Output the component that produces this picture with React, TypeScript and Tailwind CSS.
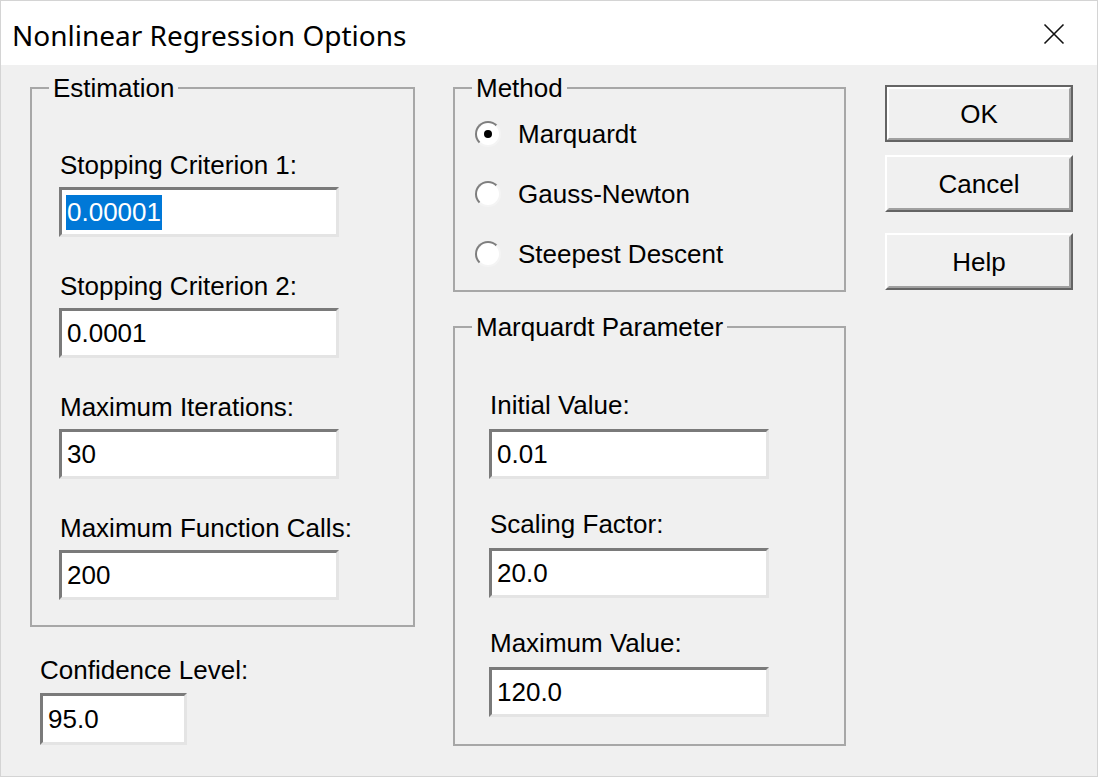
import { FC, ReactNode } from 'react';

const ui = "font-['Liberation_Sans',Arial,sans-serif] text-[26px] leading-[30px] text-black";

const Group: FC<{ title: string; className?: string; children: ReactNode }> = ({ title, className, children }) => (
  <fieldset className={`border-2 border-[#a7a7a7] ${className ?? ''}`}>
    <legend className="ml-[17px] px-[4px] leading-[30px]">{title}</legend>
    {children}
  </fieldset>
);

const Field: FC<{ value: string; selected?: boolean; className?: string }> = ({ value, selected, className }) => (
  <div
    className={`flex items-center border-[3px] border-t-[#7a7a7a] border-l-[#7a7a7a] border-r-[#e4e4e4] border-b-[#e4e4e4] bg-white pl-[4px] ${className ?? 'h-[50px] w-[280px]'}`}
  >
    {selected ? (
      <span className="bg-[#0078d7] px-[1px] leading-[35px] text-white">{value}</span>
    ) : (
      <span className="pl-[1px]">{value}</span>
    )}
  </div>
);

const LabeledField: FC<{ label: string; value: string; selected?: boolean; gap?: string }> = ({ label, value, selected, gap }) => (
  <div className="flex flex-col">
    <div className="pl-[1px]">{label}</div>
    <div className={gap ?? 'mt-[7px]'}>
      <Field value={value} selected={selected} />
    </div>
  </div>
);

const Radio: FC<{ label: string; checked?: boolean }> = ({ label, checked }) => (
  <div className="flex h-[30px] items-center">
    <div className="flex h-[26px] w-[26px] items-center justify-center rounded-full border-2 border-t-[#7e7e7e] border-l-[#7e7e7e] border-r-[#f4f4f4] border-b-[#f4f4f4] bg-white">
      {checked && <div className="h-[8px] w-[8px] rounded-full bg-black" />}
    </div>
    <span className="ml-[17px]">{label}</span>
  </div>
);

const Button: FC<{ label: string; primary?: boolean; className?: string }> = ({ label, primary, className }) =>
  primary ? (
    <div className={`h-[57px] w-[188px] border-2 border-[#646464] ${className ?? ''}`}>
      <div className="flex h-full items-center justify-center border-2 border-t-white border-l-white border-r-[#a0a0a0] border-b-[#a0a0a0]">
        {label}
      </div>
    </div>
  ) : (
    <div className={`h-[57px] w-[188px] border-2 border-t-white border-l-white border-r-[#646464] border-b-[#646464] ${className ?? ''}`}>
      <div className="flex h-full items-center justify-center border-2 border-t-[#f0f0f0] border-l-[#f0f0f0] border-r-[#a0a0a0] border-b-[#a0a0a0]">
        {label}
      </div>
    </div>
  );

export default function App() {
  return (
    <div className="h-[777px] w-[1098px] overflow-hidden border border-[#d4d4d4] bg-[#f0f0f0]">
      {/* title bar */}
      <div className="flex h-[64px] items-center justify-between bg-white pl-[11px] pr-[32px]">
        <span className="mt-[3px] font-['Noto_Sans','Open_Sans',sans-serif] text-[28px] text-black">Nonlinear Regression Options</span>
        <svg width="22" height="22" viewBox="0 0 22 22" className="mt-[1px]">
          <path d="M1.5 1.5 L20.5 20.5 M20.5 1.5 L1.5 20.5" stroke="#111" strokeWidth="1.6" fill="none" />
        </svg>
      </div>

      <div className={`flex pl-[29px] pt-[8px] ${ui}`}>
        {/* left column */}
        <div className="flex flex-col">
          <Group title="Estimation" className="w-[385px]">
            <div className="flex flex-col gap-[34px] pb-[25px] pl-[27px] pt-[47px]">
              <LabeledField label="Stopping Criterion 1:" value="0.00001" selected />
              <LabeledField label="Stopping Criterion 2:" value="0.0001" />
              <LabeledField label="Maximum Iterations:" value="30" />
              <LabeledField label="Maximum Function Calls:" value="200" />
            </div>
          </Group>
          <div className="ml-[10px] mt-[28px]">
            <div>Confidence Level:</div>
            <Field value="95.0" className="mt-[8px] h-[52px] w-[147px]" />
          </div>
        </div>

        {/* middle column */}
        <div className="ml-[38px] flex flex-col">
          <Group title="Method" className="w-[393px]">
            <div className="flex flex-col gap-[30px] pb-[21px] pl-[20px] pt-[16px]">
              <Radio label="Marquardt" checked />
              <Radio label="Gauss-Newton" />
              <Radio label="Steepest Descent" />
            </div>
          </Group>
          <Group title="Marquardt Parameter" className="mt-[20px] w-[393px]">
            <div className="flex flex-col gap-[30px] pb-[27px] pl-[34px] pt-[48px]">
              <LabeledField label="Initial Value:" value="0.01" gap="mt-[9px]" />
              <LabeledField label="Scaling Factor:" value="20.0" gap="mt-[9px]" />
              <LabeledField label="Maximum Value:" value="120.0" gap="mt-[9px]" />
            </div>
          </Group>
        </div>

        {/* buttons */}
        <div className="ml-[39px] flex flex-col pt-[12px]">
          <Button label="OK" primary />
          <Button label="Cancel" className="mt-[13px]" />
          <Button label="Help" className="mt-[21px]" />
        </div>
      </div>
    </div>
  );
}
